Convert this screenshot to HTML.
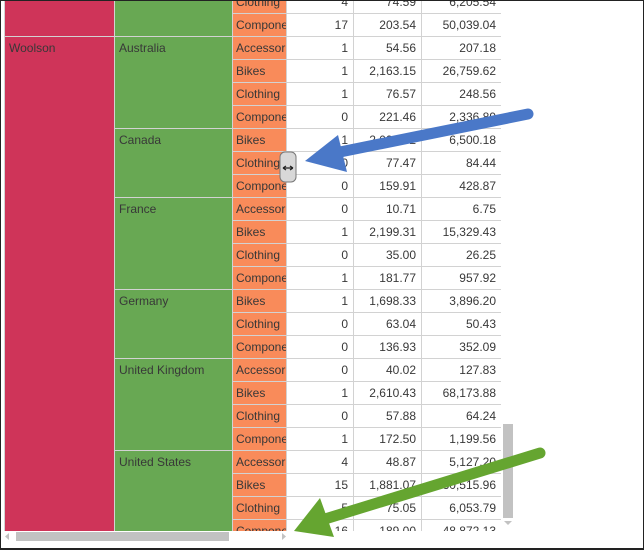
<!DOCTYPE html>
<html><head><meta charset="utf-8"><style>
*{margin:0;padding:0;box-sizing:border-box}
body{width:644px;height:550px;background:#fff;position:relative;overflow:hidden;font-family:"Liberation Sans",sans-serif;font-size:12px;color:#383838}
#frame{position:absolute;left:0;top:0;width:644px;height:550px;border:1px solid #222;border-bottom-width:2px}
#clip{position:absolute;left:4px;top:0;width:497px;height:531px;overflow:hidden}
table{position:absolute;left:0;top:-10px;width:497px;border-collapse:collapse;table-layout:fixed}
td{border:1px solid #d2d2d2;height:23px;line-height:21px;padding:0 4px;white-space:nowrap;overflow:hidden;vertical-align:middle}
td.r{background:#cf3459;vertical-align:top;padding-top:0}
td.g{background:#68a853;vertical-align:top}
td.o{background:#f98b5a;padding:0 3px;text-overflow:clip}
td.n{text-align:right;padding-right:5px}
.hdr{display:block;height:22px;line-height:22px}
#ht{position:absolute;left:16px;top:532px;width:213px;height:9px;background:#c2c2c2}
#vt{position:absolute;left:503px;top:424px;width:10px;height:94px;background:#c2c2c2}
</style></head><body>
<div id="clip"><table>
<colgroup><col style="width:110px"><col style="width:118px"><col style="width:54px"><col style="width:67px"><col style="width:68px"><col style="width:80px"></colgroup>
<tr><td class="r" rowspan="2"></td><td class="g" rowspan="2"></td><td class="o">Clothing</td><td class="n">4</td><td class="n">74.59</td><td class="n">6,205.54</td></tr>
<tr><td class="o">Compone</td><td class="n">17</td><td class="n">203.54</td><td class="n">50,039.04</td></tr>
<tr><td class="r" rowspan="22"><span class="hdr">Woolson</span></td><td class="g" rowspan="4"><span class="hdr">Australia</span></td><td class="o">Accessori</td><td class="n">1</td><td class="n">54.56</td><td class="n">207.18</td></tr>
<tr><td class="o">Bikes</td><td class="n">1</td><td class="n">2,163.15</td><td class="n">26,759.62</td></tr>
<tr><td class="o">Clothing</td><td class="n">1</td><td class="n">76.57</td><td class="n">248.56</td></tr>
<tr><td class="o">Compone</td><td class="n">0</td><td class="n">221.46</td><td class="n">2,336.89</td></tr>
<tr><td class="g" rowspan="3"><span class="hdr">Canada</span></td><td class="o">Bikes</td><td class="n">1</td><td class="n">2,091.82</td><td class="n">6,500.18</td></tr>
<tr><td class="o">Clothing</td><td class="n">0</td><td class="n">77.47</td><td class="n">84.44</td></tr>
<tr><td class="o">Compone</td><td class="n">0</td><td class="n">159.91</td><td class="n">428.87</td></tr>
<tr><td class="g" rowspan="4"><span class="hdr">France</span></td><td class="o">Accessori</td><td class="n">0</td><td class="n">10.71</td><td class="n">6.75</td></tr>
<tr><td class="o">Bikes</td><td class="n">1</td><td class="n">2,199.31</td><td class="n">15,329.43</td></tr>
<tr><td class="o">Clothing</td><td class="n">0</td><td class="n">35.00</td><td class="n">26.25</td></tr>
<tr><td class="o">Compone</td><td class="n">1</td><td class="n">181.77</td><td class="n">957.92</td></tr>
<tr><td class="g" rowspan="3"><span class="hdr">Germany</span></td><td class="o">Bikes</td><td class="n">1</td><td class="n">1,698.33</td><td class="n">3,896.20</td></tr>
<tr><td class="o">Clothing</td><td class="n">0</td><td class="n">63.04</td><td class="n">50.43</td></tr>
<tr><td class="o">Compone</td><td class="n">0</td><td class="n">136.93</td><td class="n">352.09</td></tr>
<tr><td class="g" rowspan="4"><span class="hdr">United Kingdom</span></td><td class="o">Accessori</td><td class="n">0</td><td class="n">40.02</td><td class="n">127.83</td></tr>
<tr><td class="o">Bikes</td><td class="n">1</td><td class="n">2,610.43</td><td class="n">68,173.88</td></tr>
<tr><td class="o">Clothing</td><td class="n">0</td><td class="n">57.88</td><td class="n">64.24</td></tr>
<tr><td class="o">Compone</td><td class="n">1</td><td class="n">172.50</td><td class="n">1,199.56</td></tr>
<tr><td class="g" rowspan="4"><span class="hdr">United States</span></td><td class="o">Accessori</td><td class="n">4</td><td class="n">48.87</td><td class="n">5,127.20</td></tr>
<tr><td class="o">Bikes</td><td class="n">15</td><td class="n">1,881.07</td><td class="n">30,515.96</td></tr>
<tr><td class="o">Clothing</td><td class="n">5</td><td class="n">75.05</td><td class="n">6,053.79</td></tr>
<tr><td class="o">Compone</td><td class="n">16</td><td class="n">189.00</td><td class="n">48,872.13</td></tr>
</table></div>
<div id="ht"></div>
<div id="vt"></div>
<svg width="644" height="550" style="position:absolute;left:0;top:0">
<polygon points="9,533 9,540 5,536.5" fill="#c2c2c2"/>
<polygon points="282,533 282,540 286,536.5" fill="#c2c2c2"/>
<polygon points="504,521 512,521 508,525" fill="#c2c2c2"/>
<rect x="280" y="152" width="16" height="30" rx="5" fill="#d8d8d8" stroke="#777"/>
<path d="M283 168 H293 M283 168 l3 -2 M283 168 l3 2 M293 168 l-3 -2 M293 168 l-3 2" stroke="#222" stroke-width="1.2" fill="none"/>
<line x1="528" y1="114" x2="335" y2="153" stroke="#4a78c8" stroke-width="11" stroke-linecap="round"/>
<polygon points="305,161 338,135 347,172" fill="#4a78c8"/>
<line x1="540" y1="453" x2="325" y2="519" stroke="#65a530" stroke-width="11" stroke-linecap="round"/>
<polygon points="294,531 320,498 334,537" fill="#65a530"/>
</svg>
<div id="frame"></div>
</body></html>
